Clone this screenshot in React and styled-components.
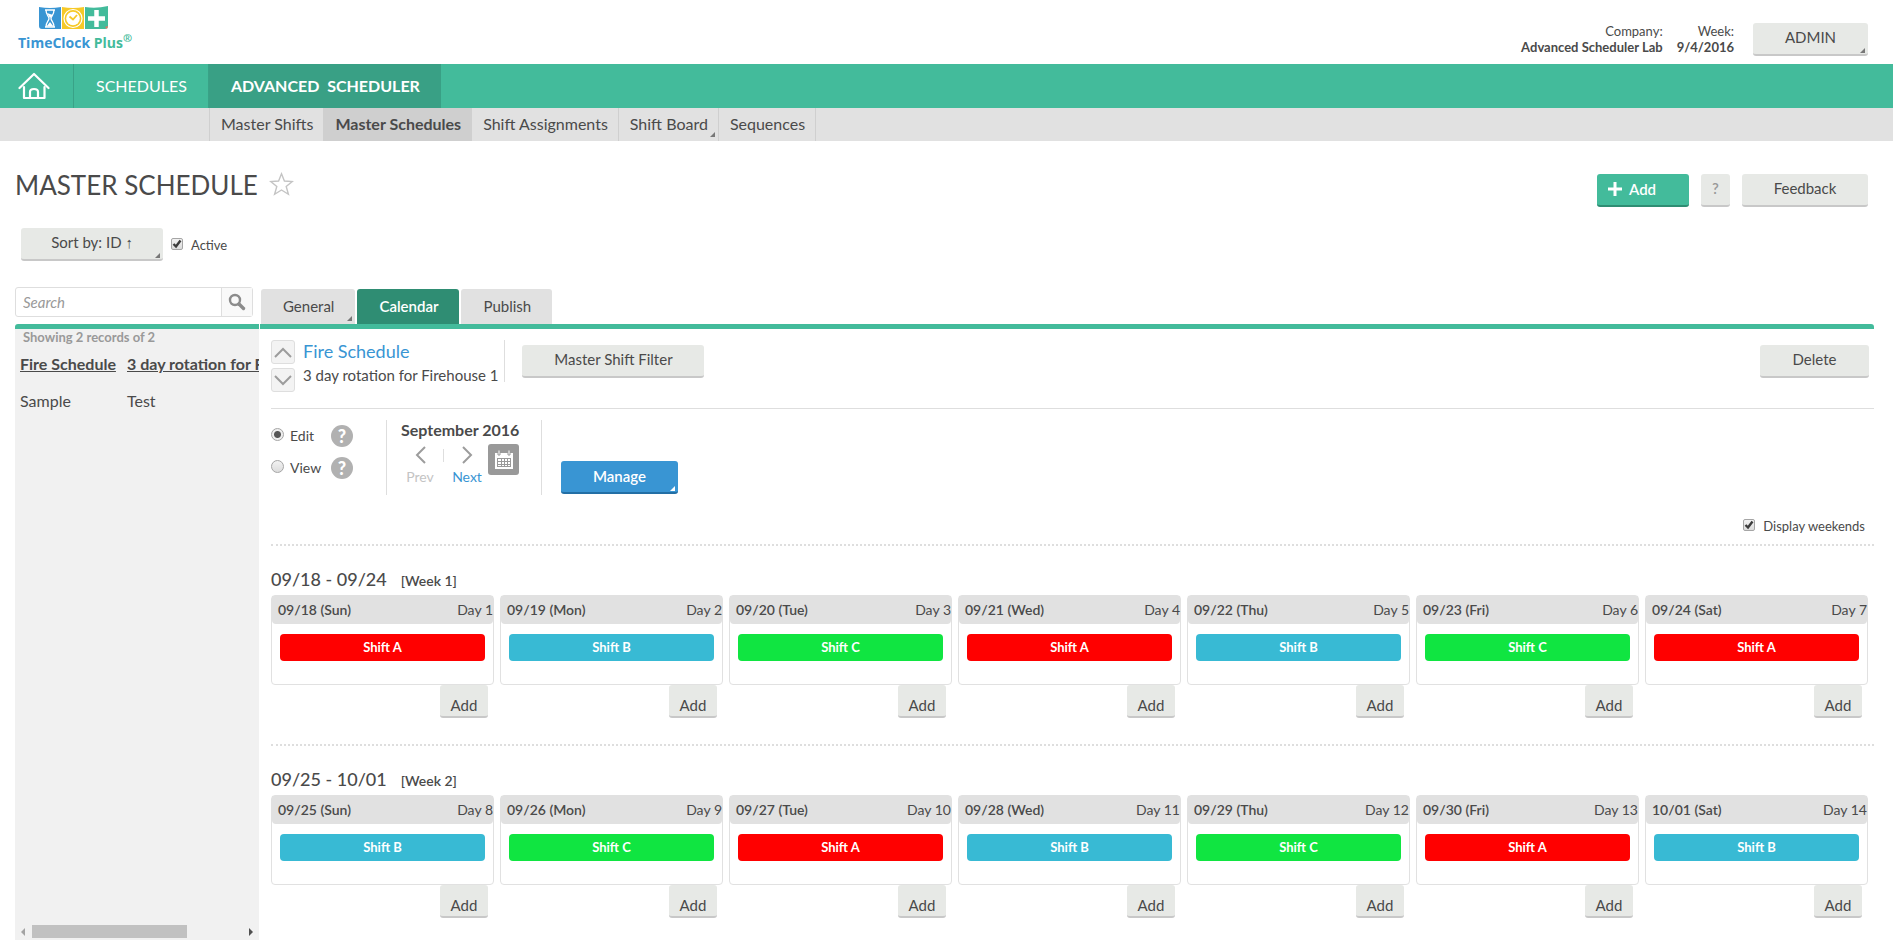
import React, { useState } from 'react';
import styled, { createGlobalStyle } from 'styled-components';

const GlobalStyle = createGlobalStyle`
  * {
    box-sizing: border-box;
  }
  body {
    margin: 0;
    background: #fff;
    color: #4a4a4a;
    font-family: Lato, 'Liberation Sans', sans-serif;
    font-size: 15px;
    line-height: 20px;
  }
  button, input {
    font-family: inherit;
    font-size: inherit;
    color: inherit;
  }
  a {
    color: inherit;
    text-decoration: none;
  }
  h1, h2, p {
    margin: 0;
    font-weight: 400;
  }
`;

const subMenu = [
  { label: 'Master Shifts' },
  { label: 'Master Schedules', active: true },
  { label: 'Shift Assignments' },
  { label: 'Shift Board', menu: true },
  { label: 'Sequences' },
];

const tabs = [
  { label: 'General', menu: true },
  { label: 'Calendar', active: true },
  { label: 'Publish' },
];

const records = [
  { id: 'Fire Schedule', desc: '3 day rotation for Firehouse 1', active: true },
  { id: 'Sample', desc: 'Test' },
];

const shiftColor = {
  A: '#ff0000',
  B: '#38bad4',
  C: '#10e541',
};

const weeks = [
  {
    range: '09/18 - 09/24',
    name: '[Week 1]',
    days: [
      { date: '09/18 (Sun)', day: 1, shift: 'A' },
      { date: '09/19 (Mon)', day: 2, shift: 'B' },
      { date: '09/20 (Tue)', day: 3, shift: 'C' },
      { date: '09/21 (Wed)', day: 4, shift: 'A' },
      { date: '09/22 (Thu)', day: 5, shift: 'B' },
      { date: '09/23 (Fri)', day: 6, shift: 'C' },
      { date: '09/24 (Sat)', day: 7, shift: 'A' },
    ],
  },
  {
    range: '09/25 - 10/01',
    name: '[Week 2]',
    days: [
      { date: '09/25 (Sun)', day: 8, shift: 'B' },
      { date: '09/26 (Mon)', day: 9, shift: 'C' },
      { date: '09/27 (Tue)', day: 10, shift: 'A' },
      { date: '09/28 (Wed)', day: 11, shift: 'B' },
      { date: '09/29 (Thu)', day: 12, shift: 'C' },
      { date: '09/30 (Fri)', day: 13, shift: 'A' },
      { date: '10/01 (Sat)', day: 14, shift: 'B' },
    ],
  },
];

const LogoMark = () => (
  <svg width="71" height="24" viewBox="0 0 71 24" aria-hidden="true">
    <path d="M1 1 Q12 3 23 1 V23 H4 Q1 23 1 20 Z" fill="#3995d3" />
    <path d="M24 1 Q35 3 46 1 V23 H24 Z" fill="#f6c928" />
    <path d="M47 1 Q58 3 70 0 V20 Q70 23 67 23 H47 Z" fill="#43bb9b" />
    <path d="M7 4 H17 M7 21 H17 M8 4 C8 9 11 10 11 12.500 C11 15 8 16 8 21 M16 4 C16 9 13 10 13 12.500 C13 15 16 16 16 21" fill="none" stroke="#fff" strokeWidth="1.3" />
    <path d="M9 7 L15 9 L12 12 Z M8.500 20.500 L12 16 L15.500 20.500 Z" fill="#fff" />
    <circle cx="35" cy="12.500" r="9" fill="none" stroke="#fff" strokeWidth="1.2" />
    <circle cx="35" cy="12.500" r="6.800" fill="#fff" />
    <path d="M31.500 10.500 L35 13.500 L39 9" fill="none" stroke="#f6c928" strokeWidth="1.8" />
    <path d="M58.500 4 V21 M50 12.500 H67" stroke="#fff" strokeWidth="4.500" />
    <path d="M67 21 L70 20 L69 23 Z" fill="#ee6f5a" />
  </svg>
);

const HomeIcon = () => (
  <svg width="32" height="28" viewBox="0 0 32 28" fill="none" stroke="#fff" strokeWidth="2.200" strokeLinejoin="round" strokeLinecap="round" aria-hidden="true">
    <path d="M1.500 16 L16 2 L30.500 16" />
    <path d="M6 15 V26 H26.500 V15" />
    <path d="M12 26 V20 Q12 17 16 17 Q20 17 20 20 V26" />
  </svg>
);

const StarIcon = () => (
  <svg width="25" height="24" viewBox="0 0 25 24" fill="none" stroke="#c4c4c4" strokeWidth="1.400" aria-hidden="true">
    <path d="M12.500 1.800 L15.400 9 L23.300 9.500 L17.200 14.500 L19.400 22.300 L12.500 18 L5.600 22.300 L7.800 14.500 L1.700 9.500 L9.600 9 Z" />
  </svg>
);

const PlusIcon = () => (
  <svg width="14" height="14" viewBox="0 0 14 14" aria-hidden="true">
    <path d="M7 0 V14 M0 7 H14" stroke="#fff" strokeWidth="3" />
  </svg>
);

const SearchIcon = () => (
  <svg width="18" height="18" viewBox="0 0 18 18" fill="none" stroke="#8c8c8c" aria-hidden="true">
    <circle cx="7" cy="7" r="5" strokeWidth="2.400" />
    <path d="M11 11 L15.500 15.500" strokeWidth="3.400" strokeLinecap="round" />
  </svg>
);

const Chevron = ({ d, w, h }) => (
  <svg width={w} height={h} viewBox={`0 0 ${w} ${h}`} fill="none" stroke="#9c9c9c" strokeWidth="2" aria-hidden="true">
    <path d={d} />
  </svg>
);

const CalendarIcon = () => (
  <svg width="20" height="20" viewBox="0 0 20 20" aria-hidden="true">
    <path d="M1 3 H19 V19 H1 Z" fill="#fff" />
    <path d="M4 0 H6 V5 H4 Z M14 0 H16 V5 H14 Z" fill="#fff" stroke="#999" />
    <path d="M3 8 H17 V17 H3 Z" fill="#999" />
    <path d="M4 9 H7 V11 H4 Z M8 9 H10 V11 H8 Z M11 9 H13 V11 H11 Z M14 9 H16 V11 H14 Z M4 12 H7 V14 H4 Z M8 12 H10 V14 H8 Z M11 12 H13 V14 H11 Z M14 12 H16 V14 H14 Z M4 15 H7 V16 H4 Z M8 15 H10 V16 H8 Z M11 15 H13 V16 H11 Z M14 15 H16 V16 H14 Z" fill="#fff" />
  </svg>
);

const CheckBox = ({ id, label, defaultChecked }) => (
  <CheckLabel htmlFor={id}>
    <CheckWrap>
      <CheckInput type="checkbox" id={id} defaultChecked={defaultChecked} />
      <svg width="12" height="12" viewBox="0 0 12 12" fill="none" stroke="#3c3c3c" strokeWidth="2.400" aria-hidden="true">
        <path d="M2.500 6 L5 8.500 L9.500 2.500" />
      </svg>
    </CheckWrap>
    {label}
  </CheckLabel>
);

export default function App() {
  const [mode, setMode] = useState('edit');

  return (
    <React.Fragment>
      <GlobalStyle />
      <Page>
        <Header>
          <Logo href="/">
            <LogoMark />
            <LogoName>
              TimeClock <span>Plus<sup>®</sup></span>
            </LogoName>
          </Logo>
          <HeaderInfo>
            <Info>
              <p>Company:</p>
              <b>Advanced Scheduler Lab</b>
            </Info>
            <Info>
              <p>Week:</p>
              <b>9/4/2016</b>
            </Info>
            <Button $width="115px" $menu>ADMIN</Button>
          </HeaderInfo>
        </Header>

        <Nav>
          <HomeLink href="/" aria-label="Home"><HomeIcon /></HomeLink>
          <NavLink href="/">SCHEDULES</NavLink>
          <NavLink href="/" $active>ADVANCED&nbsp; SCHEDULER</NavLink>
        </Nav>
        <SubNav>
          {subMenu.map((item) => (
            <SubLink href="/" key={item.label} $active={item.active} $menu={item.menu}>
              {item.label}
            </SubLink>
          ))}
        </SubNav>

        <TitleBar>
          <Title>MASTER SCHEDULE</Title>
          <IconButton aria-label="Favorite"><StarIcon /></IconButton>
          <Actions>
            <Button $color="green" $width="92px"><PlusIcon />Add</Button>
            <Button $width="29px" $muted>?</Button>
            <Button $width="126px">Feedback</Button>
          </Actions>
        </TitleBar>

        <SortBar>
          <Button $width="142px" $menu>
            <span>Sort by: ID <Arrow>↑</Arrow></span>
          </Button>
          <CheckBox id="active" label="Active" defaultChecked />
        </SortBar>

        <Columns>
          {/* Record list */}
          <Side>
            <SearchBox>
              <SearchInput type="text" placeholder="Search" aria-label="Search" />
              <SearchButton aria-label="Search"><SearchIcon /></SearchButton>
            </SearchBox>
            <RecordPanel>
              <RecordCount>Showing 2 records of 2</RecordCount>
              <RecordList>
                {records.map((item) => (
                  <Record href="/" key={item.id} $active={item.active}>
                    <span>{item.id}</span>
                    <span>{item.desc}</span>
                  </Record>
                ))}
              </RecordList>
              <ScrollBar>
                <ScrollArrow $dir="left" />
                <ScrollTrack><ScrollThumb /></ScrollTrack>
                <ScrollArrow $dir="right" />
              </ScrollBar>
            </RecordPanel>
          </Side>

          {/* Schedule detail */}
          <Main>
            <Tabs>
              {tabs.map((item) => (
                <Tab key={item.label} $active={item.active} $menu={item.menu}>{item.label}</Tab>
              ))}
            </Tabs>
            <Panel>
              <DetailRow>
                <Stepper>
                  <StepButton aria-label="Previous record"><Chevron w={18} h={11} d="M1 10 L9 2 L17 10" /></StepButton>
                  <StepButton aria-label="Next record"><Chevron w={18} h={11} d="M1 1 L9 9 L17 1" /></StepButton>
                </Stepper>
                <DetailName>
                  <h2>Fire Schedule</h2>
                  <p>3 day rotation for Firehouse 1</p>
                </DetailName>
                <DetailButtons>
                  <Button $width="182px">Master Shift Filter</Button>
                  <Button $width="109px">Delete</Button>
                </DetailButtons>
              </DetailRow>

              <ControlRow>
                <ModeList>
                  <Mode>
                    <input type="radio" id="edit" name="mode" checked={mode === 'edit'} onChange={() => setMode('edit')} />
                    <label htmlFor="edit">Edit</label>
                    <Help aria-label="About edit">?</Help>
                  </Mode>
                  <Mode>
                    <input type="radio" id="view" name="mode" checked={mode === 'view'} onChange={() => setMode('view')} />
                    <label htmlFor="view">View</label>
                    <Help aria-label="About view">?</Help>
                  </Mode>
                </ModeList>
                <Month>
                  <b>September 2016</b>
                  <MonthNav>
                    <MonthButton $off><Chevron w={11} h={18} d="M10 1 L2 9 L10 17" />Prev</MonthButton>
                    <MonthSplit />
                    <MonthButton><Chevron w={11} h={18} d="M1 1 L9 9 L1 17" />Next</MonthButton>
                    <DateButton aria-label="Pick a date"><CalendarIcon /></DateButton>
                  </MonthNav>
                </Month>
                <Button $color="blue" $width="117px" $menu>Manage</Button>
              </ControlRow>

              <Weekends>
                <CheckBox id="weekends" label="Display weekends" defaultChecked />
              </Weekends>

              {weeks.map((week) => (
                <Week key={week.name}>
                  <WeekTitle>
                    {week.range}
                    <small>{week.name}</small>
                  </WeekTitle>
                  <Days>
                    {week.days.map((item) => (
                      <Day key={item.date}>
                        <Card>
                          <CardHead>
                            <b>{item.date}</b>
                            <span>Day {item.day}</span>
                          </CardHead>
                          <Shift $bg={shiftColor[item.shift]}>Shift {item.shift}</Shift>
                        </Card>
                        <AddButton>Add</AddButton>
                      </Day>
                    ))}
                  </Days>
                </Week>
              ))}
            </Panel>
          </Main>
        </Columns>
      </Page>
    </React.Fragment>
  );
}

/* corner mark of everything that opens a menu */
const corner = (color, right, bottom) => `
  &::after {
    content: '';
    position: absolute;
    right: ${right};
    bottom: ${bottom};
    border-left: 5px solid transparent;
    border-bottom: 5px solid ${color};
  }
`;

const buttonColors = {
  gray: { bg: '#e7e9e6', edge: '#c8c8c8', text: '#4a4a4a', mark: '#777' },
  green: { bg: '#43bb9b', edge: '#2f8d73', text: '#fff', mark: '#fff' },
  blue: { bg: '#3995d3', edge: '#236fa5', text: '#fff', mark: '#fff' },
};

const Page = styled.div`
  display: flex;
  flex-direction: column;
  min-height: 100vh;
`;

const Button = styled.button`
  position: relative;
  display: flex;
  align-items: center;
  justify-content: ${(p) => (p.$color === 'green' ? 'flex-start' : 'center')};
  gap: 7px;
  flex: none;
  width: ${(p) => p.$width};
  height: 33px;
  padding: ${(p) => (p.$color === 'green' ? '0 11px 1px' : '0 0 4px')};
  border: 0;
  border-bottom: 2px solid ${(p) => buttonColors[p.$color || 'gray'].edge};
  border-radius: 3px;
  background: ${(p) => buttonColors[p.$color || 'gray'].bg};
  color: ${(p) => (p.$muted ? '#999' : buttonColors[p.$color || 'gray'].text)};
  font-weight: ${(p) => (p.$color || p.$muted ? 600 : 400)};
  font-size: 15px;
  cursor: pointer;
  ${(p) => p.$menu && corner(buttonColors[p.$color || 'gray'].mark, '3px', '1px')}
`;

const Arrow = styled.span`
  font-family: 'Liberation Sans', sans-serif;
`;

const IconButton = styled.button`
  display: flex;
  padding: 3px 0 0;
  border: 0;
  background: none;
`;

const Header = styled.header`
  display: flex;
  justify-content: space-between;
  align-items: flex-start;
  height: 64px;
  padding: 6px 25px 0 18px;
`;

const Logo = styled.a`
  display: flex;
  flex-direction: column;
  align-items: flex-start;
  svg {
    margin-left: 20px;
  }
`;

const LogoName = styled.span`
  color: #3995d3;
  font: 700 14px/26px 'Open Sans', sans-serif;
  span {
    color: #43bb9b;
  }
  sup {
    font-size: 11px;
    line-height: 8px;
  }
`;

const HeaderInfo = styled.div`
  display: flex;
  gap: 14px;
  padding-top: 17px;
  button {
    margin-left: 5px;
  }
`;

const Info = styled.div`
  font-size: 13px;
  line-height: 16px;
  text-align: right;
`;

const Nav = styled.nav`
  display: flex;
  height: 44px;
  background: #43bb9b;
`;

const HomeLink = styled.a`
  display: flex;
  align-items: center;
  padding: 0 23px 0 18px;
`;

const NavLink = styled.a`
  padding: 0 21px 0 22px;
  border-left: 1px solid #39a287;
  background: ${(p) => (p.$active ? '#39a085' : 'none')};
  color: #fff;
  font-size: 16px;
  font-weight: ${(p) => (p.$active ? 700 : 400)};
  line-height: 44px;
`;

const SubNav = styled.nav`
  display: flex;
  height: 33px;
  padding-left: 209px;
  background: #e1e1e1;
`;

const SubLink = styled.a`
  position: relative;
  padding: 0 10px 0 11px;
  border-left: 1px solid #cfcfcf;
  background: ${(p) => (p.$active ? '#cfcfcf' : 'none')};
  font-size: 16px;
  font-weight: ${(p) => (p.$active ? 700 : 400)};
  line-height: 32px;
  &:last-child {
    border-right: 1px solid #cfcfcf;
  }
  ${(p) => p.$menu && corner('#777', '3px', '4px')}
`;

const TitleBar = styled.div`
  display: flex;
  align-items: flex-start;
  gap: 11px;
  padding: 28px 25px 0 15px;
`;

const Title = styled.h1`
  font-size: 26px;
  line-height: 33px;
`;

const Actions = styled.div`
  display: flex;
  gap: 12px;
  margin-left: auto;
  padding-top: 5px;
`;

const SortBar = styled.div`
  display: flex;
  align-items: center;
  gap: 8px;
  padding: 21px 21px 26px;
`;

const CheckLabel = styled.label`
  display: inline-flex;
  align-items: center;
  gap: 8px;
  font-size: 13px;
`;

const CheckWrap = styled.span`
  display: grid;
  margin-bottom: 2px;
  > * {
    grid-area: 1 / 1;
  }
  input:not(:checked) + svg {
    display: none;
  }
`;

const CheckInput = styled.input`
  appearance: none;
  width: 12px;
  height: 12px;
  margin: 0;
  border: 1px solid #a5a5a5;
  border-radius: 2px;
  background: linear-gradient(#f2f2f2, #dcdcdc);
`;

const Columns = styled.div`
  display: flex;
  flex: 1;
  gap: 1px;
  padding: 0 19px 0 15px;
`;

const Side = styled.aside`
  display: flex;
  flex-direction: column;
  flex: none;
  width: 244px;
`;

const SearchBox = styled.div`
  display: flex;
  width: 238px;
  height: 30px;
  margin-bottom: 7px;
  border: 1px solid #dedede;
  border-radius: 3px;
`;

const SearchInput = styled.input`
  flex: 1;
  min-width: 0;
  padding: 0 7px;
  border: 0;
  background: none;
  &::placeholder {
    color: #999;
    font-style: italic;
  }
`;

const SearchButton = styled.button`
  display: flex;
  align-items: center;
  justify-content: center;
  width: 31px;
  padding: 0;
  border: 0;
  border-left: 1px solid #dedede;
  background: #f9f9f9;
`;

const RecordPanel = styled.div`
  display: flex;
  flex-direction: column;
  flex: 1;
  border-top: 5px solid #43bb9b;
  border-top-left-radius: 3px;
  background: #f1f1f1;
`;

const RecordCount = styled.p`
  padding-left: 8px;
  color: #999;
  font-size: 13px;
  font-weight: 700;
  line-height: 16px;
`;

const RecordList = styled.div`
  flex: 1;
  overflow: hidden;
`;

const Record = styled.a`
  display: flex;
  gap: 12px;
  padding-left: 5px;
  font-size: 16px;
  font-weight: ${(p) => (p.$active ? 700 : 400)};
  line-height: 37px;
  white-space: nowrap;
  span {
    text-decoration: ${(p) => (p.$active ? 'underline' : 'none')};
  }
  span:first-child {
    width: 95px;
    flex: none;
  }
`;

const ScrollBar = styled.div`
  display: flex;
  align-items: center;
  gap: 7px;
  height: 17px;
  padding: 0 6px;
`;

const ScrollArrow = styled.span`
  border: 4px solid transparent;
  border-${(p) => p.$dir}-width: 0;
  border-${(p) => (p.$dir === 'left' ? 'right' : 'left')}-color: ${(p) => (p.$dir === 'left' ? '#a3a3a3' : '#505050')};
`;

const ScrollTrack = styled.div`
  flex: 1;
`;

const ScrollThumb = styled.div`
  width: 74%;
  height: 13px;
  background: #c1c1c1;
`;

const Main = styled.main`
  flex: 1;
  min-width: 0;
`;

const Tabs = styled.div`
  display: flex;
  gap: 2px;
  padding: 2px 1px 0;
`;

const Tab = styled.button`
  position: relative;
  height: 35px;
  padding: 0 21px 1px 22px;
  border: 0;
  border-radius: 3px 3px 0 0;
  background: ${(p) => (p.$active ? '#2f8d73' : '#e1e1e1')};
  color: ${(p) => (p.$active ? '#fff' : '#4a4a4a')};
  font-weight: ${(p) => (p.$active ? 600 : 400)};
  ${(p) => p.$menu && corner('#777', '3px', '3px')}
`;

const Panel = styled.div`
  border-top: 5px solid #43bb9b;
  border-top-right-radius: 3px;
  padding: 0 0 0 11px;
`;

const DetailRow = styled.div`
  display: flex;
  align-items: flex-start;
  gap: 8px;
  height: 80px;
  padding-top: 11px;
  border-bottom: 1px solid #dedede;
`;

const Stepper = styled.div`
  display: flex;
  flex-direction: column;
  gap: 4px;
`;

const StepButton = styled.button`
  display: flex;
  align-items: center;
  justify-content: center;
  width: 24px;
  height: 24px;
  padding: 0;
  border: 1px solid #dedede;
  border-radius: 3px;
  background: #f3f3f3;
`;

const DetailName = styled.div`
  height: 42px;
  padding-right: 6px;
  border-right: 1px solid #dedede;
  h2 {
    color: #3995d3;
    font-size: 18px;
    line-height: 23px;
  }
  p {
    line-height: 24px;
  }
`;

const DetailButtons = styled.div`
  display: flex;
  flex: 1;
  justify-content: space-between;
  padding: 5px 5px 0 9px;
`;

const ControlRow = styled.div`
  display: flex;
  align-items: flex-start;
  padding-top: 11px;
  > button {
    margin: 41px 0 0 19px;
    padding-bottom: 2px;
  }
`;

const ModeList = styled.div`
  display: flex;
  flex-direction: column;
  gap: 10px;
  width: 115px;
  padding-top: 5px;
`;

const Mode = styled.div`
  display: flex;
  align-items: center;
  font-size: 14px;
  input {
    appearance: none;
    width: 13px;
    height: 13px;
    margin: 0 6px 3px 0;
    border: 1px solid #a5a5a5;
    border-radius: 50%;
    background: linear-gradient(#f2f2f2, #dcdcdc);
  }
  input:checked {
    background: radial-gradient(circle, #555 3px, #eee 4px);
  }
  label {
    width: 41px;
  }
`;

const Help = styled.button`
  width: 22px;
  height: 22px;
  padding: 0;
  border: 0;
  border-radius: 50%;
  background: #b1b1b1;
  color: #fff;
  font-size: 18px;
  font-weight: 900;
  line-height: 22px;
`;

const Month = styled.div`
  width: 156px;
  height: 75px;
  padding-left: 14px;
  border: solid #dedede;
  border-width: 0 1px;
  white-space: nowrap;
  b {
    font-size: 16px;
  }
`;

const MonthNav = styled.div`
  display: flex;
  align-items: flex-start;
  padding: 4px 0 0 5px;
`;

const MonthButton = styled.button`
  display: flex;
  flex-direction: column;
  align-items: center;
  gap: 4px;
  width: 28px;
  padding: 2px 0 0;
  border: 0;
  background: none;
  color: ${(p) => (p.$off ? '#c4c4c4' : '#3995d3')};
  font-size: 14px;
  line-height: 18px;
`;

const MonthSplit = styled.span`
  width: 1px;
  height: 13px;
  margin: 5px 9px 0;
  background: #dedede;
`;

const DateButton = styled.button`
  display: flex;
  align-items: center;
  justify-content: center;
  width: 31px;
  height: 31px;
  margin-left: 7px;
  padding: 0;
  border: 0;
  border-radius: 3px;
  background: #999;
`;

const Weekends = styled.div`
  display: flex;
  justify-content: flex-end;
  padding: 21px 9px 8px;
`;

const Week = styled.section`
  padding: 22px 0 26px;
  border-top: 2px dotted #dedede;
  &:last-child {
    padding-bottom: 0;
  }
`;

const WeekTitle = styled.h2`
  display: flex;
  align-items: baseline;
  gap: 14px;
  height: 24px;
  margin-bottom: 3px;
  font-size: 18px;
  font-weight: 500;
  line-height: 22px;
  small {
    font-size: 14px;
    font-weight: 600;
    line-height: 18px;
  }
`;

const Days = styled.div`
  display: grid;
  grid-template-columns: repeat(7, 1fr);
  gap: 6px;
  padding-right: 6px;
`;

const Day = styled.div`
  display: flex;
  flex-direction: column;
  align-items: flex-end;
`;

const Card = styled.div`
  width: 100%;
  height: 90px;
  border: 1px solid #e1e1e1;
  border-radius: 4px;
`;

const CardHead = styled.div`
  display: flex;
  justify-content: space-between;
  padding-left: 6px;
  border-radius: 0 0 4px 4px;
  background: #e1e1e1;
  font-size: 14px;
  line-height: 28px;
  b {
    font-weight: 600;
  }
`;

const Shift = styled.div`
  margin: 10px 8px;
  border-radius: 4px;
  background: ${(p) => p.$bg};
  color: #fff;
  font-size: 13px;
  font-weight: 700;
  line-height: 27px;
  text-align: center;
`;

const AddButton = styled.button`
  width: 48px;
  height: 33px;
  margin-right: 6px;
  padding: 8px 0 0;
  border: 0;
  border-bottom: 2px solid #c8c8c8;
  border-radius: 3px;
  background: #e7e9e6;
`;
